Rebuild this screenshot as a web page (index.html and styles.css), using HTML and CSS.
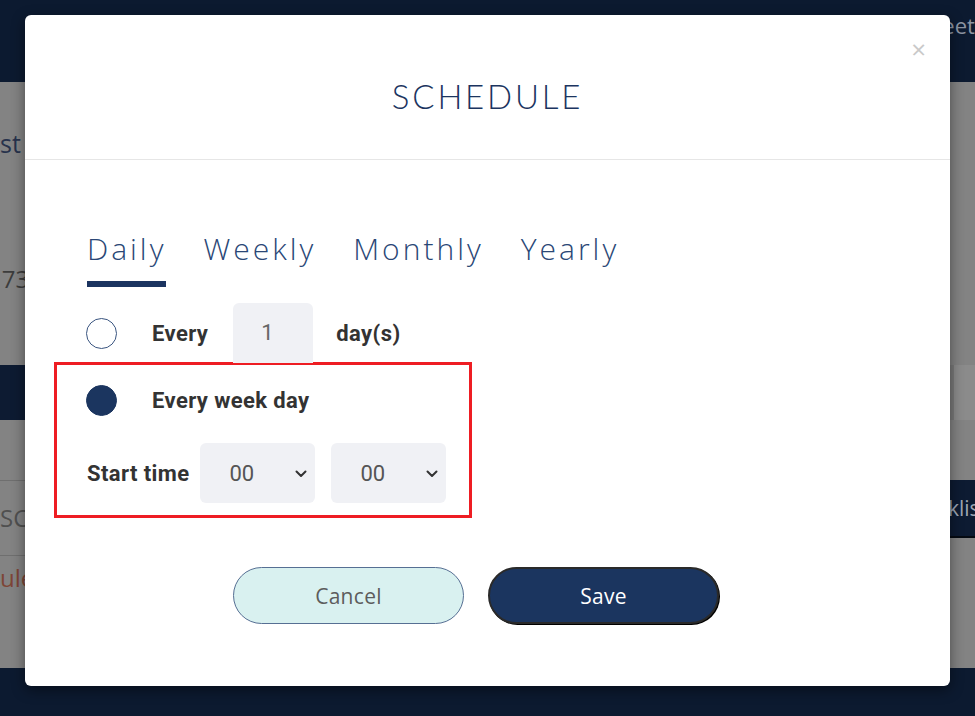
FILE: index.html
```html
<!DOCTYPE html>
<html lang="en">
<head>
<meta charset="utf-8">
<title>Schedule</title>
<link rel="stylesheet" href="styles.css">
</head>
<body>
<div class="page">
  <header class="topbar"><span class="topbar-link">Timesheet</span></header>
  <section class="panel-top">
    <div class="crumb">st</div>
    <div class="count">173</div>
  </section>
  <div class="band">
    <div class="band-dark"></div>
    <div class="band-box"></div>
  </div>
  <section class="panel-list">
    <div class="list-left">
      <div class="list-row list-head">SC</div>
      <div class="list-row list-item">ule</div>
    </div>
    <div class="list-right">
      <span class="bg-btn">Checklist</span>
    </div>
  </section>
  <footer class="footbar"></footer>
</div>

<div class="modal">
  <div class="modal-header">
    <h2 class="modal-title">SCHEDULE</h2>
    <span class="close">×</span>
  </div>
  <div class="modal-body">
    <nav class="tabs">
      <span class="tab active">Daily</span>
      <span class="tab">Weekly</span>
      <span class="tab">Monthly</span>
      <span class="tab">Yearly</span>
    </nav>
    <div class="opt-row row-every">
      <span class="radio"></span>
      <span class="label label-every">Every</span>
      <span class="num-input">1</span>
      <span class="label label-days">day(s)</span>
    </div>
    <div class="highlight">
      <div class="opt-row row-weekday">
        <span class="radio checked"></span>
        <span class="label label-every">Every week day</span>
      </div>
      <div class="time-row">
        <span class="label">Start time</span>
        <span class="select"><span class="select-val">00</span><svg class="chev" width="12" height="8" viewBox="0 0 12 8"><path d="M1.5 1.5 L6 6 L10.5 1.5" fill="none" stroke="#333" stroke-width="2" stroke-linecap="round" stroke-linejoin="round"/></svg></span>
        <span class="select"><span class="select-val">00</span><svg class="chev" width="12" height="8" viewBox="0 0 12 8"><path d="M1.5 1.5 L6 6 L10.5 1.5" fill="none" stroke="#333" stroke-width="2" stroke-linecap="round" stroke-linejoin="round"/></svg></span>
      </div>
    </div>
    <div class="actions">
      <button class="btn btn-cancel">Cancel</button>
      <button class="btn btn-save">Save</button>
    </div>
  </div>
</div>
</body>
</html>
```

FILE: styles.css
```css
* { box-sizing: border-box; }
html, body { margin: 0; padding: 0; }
body {
  width: 975px;
  height: 716px;
  overflow: hidden;
  position: relative;
  background: #838383;
  font-family: "Open Sans", "Liberation Sans", sans-serif;
}

/* background page (dimmed) */
.page {
  display: flex;
  flex-direction: column;
  height: 716px;
}
.topbar {
  height: 82px;
  background: #0c1a30;
  display: flex;
  align-items: flex-start;
  padding-left: 868px;
  padding-top: 10px;
  overflow: hidden;
  white-space: nowrap;
}
.topbar-link {
  color: #8c94a2;
  font-size: 22px;
  line-height: 30px;
}
.panel-top {
  height: 283px;
  background: #838383;
  padding-top: 46px;
  overflow: hidden;
}
.crumb {
  color: #27324c;
  font-size: 25px;
  line-height: 30px;
}
.count {
  margin-top: 106px;
  margin-left: -12px;
  color: #3c3c3c;
  font-size: 24px;
  line-height: 30px;
}
.band {
  height: 55px;
  display: flex;
}
.band-dark {
  width: 950px;
  background: #0d1b32;
}
.band-box {
  flex: 1;
  background: #8b8b8b;
  border-left: 4px solid #7a7a7a;
}
.panel-list {
  height: 248px;
  display: flex;
  background: #838383;
}
.list-left {
  flex: 1;
  padding-top: 60px;
}
.list-row {
  border-top: 1px solid #6f6f6f;
  font-size: 24px;
}
.list-head {
  height: 75px;
  line-height: 74px;
  color: #505050;
}
.list-item {
  line-height: 44px;
  color: #7e4536;
}
.list-right {
  width: 95px;
  padding-top: 60px;
}
.bg-btn {
  display: block;
  height: 58px;
  background: #0d1b32;
  border-bottom: 2px solid #050a12;
  color: #9ea6b4;
  font-size: 21px;
  line-height: 56px;
  padding-left: 20px;
  white-space: nowrap;
  overflow: hidden;
}
.footbar {
  flex: 1;
  background: #0c1a30;
}

/* modal */
.modal {
  position: absolute;
  left: 25px;
  top: 15px;
  width: 925px;
  height: 671px;
  background: #fff;
  border-radius: 6px;
  box-shadow: 0 4px 14px rgba(0, 0, 0, 0.45);
}
.modal-header {
  position: relative;
  padding: 61px 0 43px;
  border-bottom: 1px solid #e6e6e6;
}
.modal-title {
  margin: 0;
  text-align: center;
  font-family: "Lato", "Open Sans", sans-serif;
  font-weight: 300;
  font-size: 33px;
  line-height: 40px;
  letter-spacing: 2.8px;
  color: #1b3460;
}
.close {
  position: absolute;
  top: 19px;
  right: 24px;
  font-family: "Open Sans", sans-serif;
  font-size: 26px;
  line-height: 30px;
  color: #c9c9c9;
}
.modal-body {
  padding-left: 29px;
}
.tabs {
  display: flex;
  gap: 37px;
  margin-top: 72px;
  padding-left: 33px;
}
.tab {
  font-family: "Open Sans", sans-serif;
  font-weight: 300;
  font-size: 30px;
  line-height: 34px;
  letter-spacing: 3px;
  color: #2a4776;
  padding-bottom: 15px;
  border-bottom: 6px solid transparent;
}
.tab.active {
  border-bottom-color: #1b3460;
}
.opt-row {
  display: flex;
  align-items: center;
}
.row-every {
  margin-top: 16px;
  height: 60px;
  padding-left: 32px;
}
.radio {
  width: 31px;
  height: 31px;
  border-radius: 50%;
  border: 1.5px solid #3a5580;
  flex: none;
}
.radio.checked {
  background: #1b355f;
  border-color: #1b355f;
}
.label {
  font-family: "Roboto", "Liberation Sans", sans-serif;
  font-weight: 700;
  font-size: 22px;
  letter-spacing: 0.4px;
  color: #333;
}
.label-every {
  margin-left: 35px;
}
.num-input {
  margin-left: 25px;
  width: 80px;
  height: 60px;
  background: #f0f1f5;
  border-radius: 6px 6px 0 0;
  padding-left: 28px;
  font-family: "Roboto", sans-serif;
  font-size: 22px;
  line-height: 60px;
  color: #666;
}
.label-days {
  margin-left: 23px;
}
.highlight {
  width: 418px;
  margin-top: -1px;
  border: 3px solid #ee1d23;
  padding: 0 0 12px 29px;
}
.row-weekday {
  height: 70px;
}
.time-row {
  margin-top: 8px;
  display: flex;
  align-items: center;
  margin-left: 1px;
}
.select {
  width: 115px;
  height: 60px;
  background: #f0f1f5;
  border-radius: 6px;
  display: flex;
  align-items: center;
  justify-content: space-between;
  padding: 0 8px 0 29px;
  margin-left: 16px;
}
.time-row .label + .select {
  margin-left: 11px;
}
.select-val {
  font-family: "Roboto", sans-serif;
  font-size: 22px;
  color: #555;
}
.chev {
  display: block;
  margin-top: 2px;
}
.actions {
  display: flex;
  gap: 24px;
  margin-top: 49px;
  padding-left: 179px;
}
.btn {
  width: 231px;
  height: 57px;
  border-radius: 29px;
  font-family: "Open Sans", sans-serif;
  font-size: 21px;
  letter-spacing: 0.3px;
  cursor: pointer;
}
.btn-cancel {
  background: #d9f1f0;
  border: 1.5px solid #566f93;
  color: #5c5c5c;
}
.btn-save {
  background: #1b355f;
  border: 2px solid #2a2a2a;
  box-shadow: 1px 1px 0 #000;
  color: #fff;
  font-weight: 500;
}
```
